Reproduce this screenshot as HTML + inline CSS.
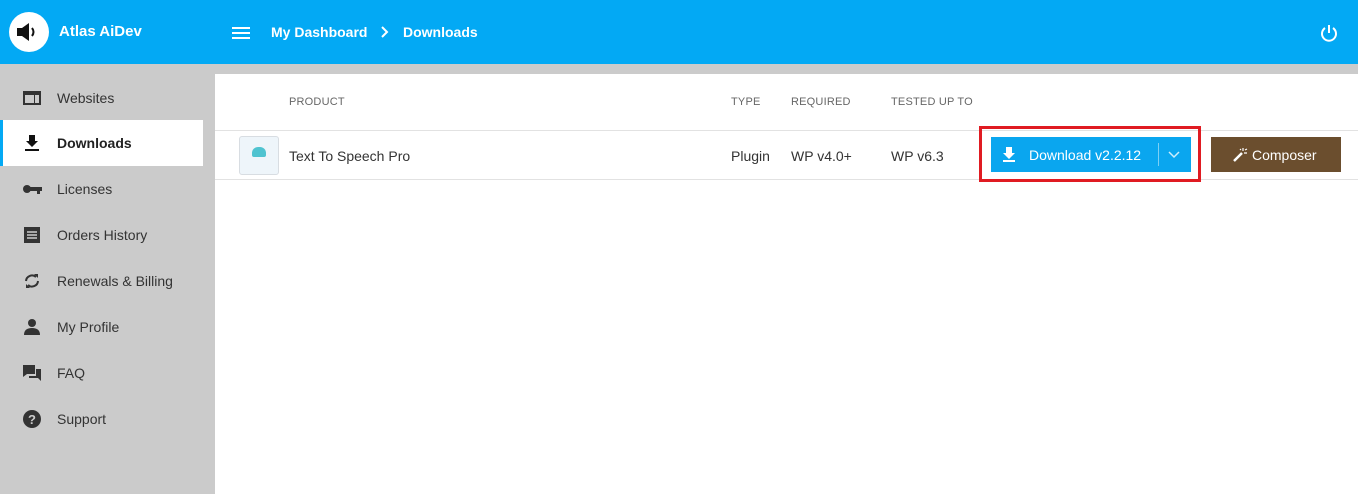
<!DOCTYPE html>
<html><head><style>
*{margin:0;padding:0;box-sizing:border-box}
body{width:1358px;height:494px;overflow:hidden;background:#cbcbcb;font-family:"Liberation Sans",sans-serif;position:relative}
.hd{position:absolute;left:0;top:0;width:1358px;height:64px;background:#03a9f4;color:#fff}
.abs{position:absolute}
.side .it{position:absolute;left:0;width:203px;height:46px;font-size:14px;color:#333;display:flex;align-items:center}
.side .it span{position:absolute;left:57px}
.side .ic{position:absolute;left:22px;width:20px;height:20px}
.panel{position:absolute;left:215px;top:74px;width:1143px;height:420px;background:#fff}
.th{position:absolute;top:22px;font-size:11px;color:#666;letter-spacing:.2px}
.td{position:absolute;top:74px;font-size:14px;color:#333}
</style></head><body>
<div class="hd">
 <div class="abs" style="left:9px;top:12px;width:40px;height:40px;border-radius:50%;background:#fff"></div>
 <svg class="abs" style="left:15px;top:21px" width="26" height="22" viewBox="0 0 26 22"><path d="M2 7h5l7-5v18l-7-5H2z" fill="#111"/><path d="M17 7q3 4 0 8" stroke="#111" stroke-width="2" fill="none"/></svg>
 <div class="abs" style="left:59px;top:23px;font-size:15px;font-weight:bold">Atlas AiDev</div>
 <div class="abs" style="left:232px;top:27px;width:18px;height:2px;background:#fff;box-shadow:0 5px 0 #fff,0 10px 0 #fff"></div>
 <div class="abs" style="left:271px;top:24px;font-size:14px;font-weight:bold">My Dashboard</div>
 <svg class="abs" style="left:380px;top:26px" width="10" height="12"><path d="M2 1l5 5-5 5" stroke="#fff" stroke-width="2" fill="none"/></svg>
 <div class="abs" style="left:403px;top:24px;font-size:14px;font-weight:bold">Downloads</div>
 <svg class="abs" style="left:1319px;top:23px" width="20" height="20" viewBox="0 0 20 20"><path d="M6 5a7 7 0 1 0 8 0" stroke="#fff" stroke-width="2" fill="none"/><path d="M10 2v8" stroke="#fff" stroke-width="2"/></svg>
</div>
<div class="side">
 <div class="it" style="top:75px"><svg class="ic" viewBox="0 0 20 20"><rect x="1" y="3" width="18" height="14" fill="#333"/><rect x="3" y="7" width="9" height="8" fill="#cbcbcb"/><rect x="13" y="7" width="4" height="8" fill="#cbcbcb"/></svg><span>Websites</span></div>
 <div class="it" style="top:120px;background:#fff;border-left:3px solid #03a9f4;font-weight:bold;color:#222"><svg class="ic" style="left:19px" viewBox="0 0 20 20"><path d="M7 2h6v6h3l-6 6-6-6h3z M3 16h14v2H3z" fill="#111"/></svg><span style="left:54px">Downloads</span></div>
 <div class="it" style="top:166px"><svg class="ic" viewBox="0 0 20 20"><circle cx="5" cy="10" r="4" fill="#333"/><rect x="8" y="8" width="12" height="4" fill="#333"/><rect x="15" y="11" width="3" height="4" fill="#333"/></svg><span>Licenses</span></div>
 <div class="it" style="top:212px"><svg class="ic" viewBox="0 0 20 20"><rect x="2" y="2" width="16" height="16" fill="#333"/><path d="M5 7h10M5 10h10M5 13h10" stroke="#cbcbcb" stroke-width="1.5"/></svg><span>Orders History</span></div>
 <div class="it" style="top:258px"><svg class="ic" viewBox="0 0 20 20"><path d="M4 10a6 6 0 0 1 10-4M16 10a6 6 0 0 1-10 4" stroke="#333" stroke-width="2" fill="none"/><path d="M12 3h4v4zM8 17H4v-4z" fill="#333"/></svg><span>Renewals &amp; Billing</span></div>
 <div class="it" style="top:304px"><svg class="ic" viewBox="0 0 20 20"><circle cx="10" cy="6" r="4" fill="#333"/><path d="M2 18q0-7 8-7t8 7z" fill="#333"/></svg><span>My Profile</span></div>
 <div class="it" style="top:350px"><svg class="ic" viewBox="0 0 20 20"><path d="M1 2h12v9H5l-4 3z" fill="#333"/><path d="M14 6h5v12l-3-3H7v-2h7z" fill="#333"/></svg><span>FAQ</span></div>
 <div class="it" style="top:396px"><svg class="ic" viewBox="0 0 20 20"><circle cx="10" cy="10" r="9" fill="#333"/><text x="10" y="15" font-size="13" font-weight="bold" fill="#cbcbcb" text-anchor="middle" font-family="Liberation Sans">?</text></svg><span>Support</span></div>
</div>
<div class="panel">
 <div class="th" style="left:74px">PRODUCT</div>
 <div class="th" style="left:516px">TYPE</div>
 <div class="th" style="left:576px">REQUIRED</div>
 <div class="th" style="left:676px">TESTED UP TO</div>
 <div class="abs" style="left:0;top:56px;width:1143px;height:1px;background:#e2e2e2"></div>
 <div class="abs" style="left:0;top:105px;width:1143px;height:1px;background:#e2e2e2"></div>
 <div class="abs" style="left:24px;top:62px;width:40px;height:39px;border:1px solid #d8dde2;border-radius:3px;background:#eef5fa"></div>
 <div class="abs" style="left:37px;top:73px;width:14px;height:10px;border-radius:6px 6px 2px 2px;background:#4fc3d0"></div>
 <div class="td" style="left:74px">Text To Speech Pro</div>
 <div class="td" style="left:516px">Plugin</div>
 <div class="td" style="left:576px">WP v4.0+</div>
 <div class="td" style="left:676px">WP v6.3</div>
 <div class="abs" style="left:764px;top:52px;width:222px;height:56px;border:3px solid #e01b22"></div>
 <div class="abs" style="left:776px;top:63px;width:200px;height:35px;background:#0aa6ef;color:#fff;font-size:14px">
  <svg class="abs" style="left:10px;top:9px" width="16" height="17"><path d="M5 1h6v6h3l-6 6-6-6h3z M2 14h12v2H2z" fill="#fff"/></svg>
  <div class="abs" style="left:38px;top:10px">Download v2.2.12</div>
  <div class="abs" style="left:167px;top:6px;width:1px;height:23px;background:#7dd0f5"></div>
  <svg class="abs" style="left:177px;top:14px" width="12" height="8"><path d="M1 1l5 5 5-5" stroke="#cdeefc" stroke-width="1.5" fill="none"/></svg>
 </div>
 <div class="abs" style="left:996px;top:63px;width:130px;height:35px;background:#6b4e2e;color:#fff;font-size:14px">
  <svg class="abs" style="left:21px;top:10px" width="16" height="16" viewBox="0 0 16 16"><path d="M2 14L10 6" stroke="#fff" stroke-width="2.5"/><path d="M11 1v3M13 3l2-1M12 6h3M9 3L8 2" stroke="#fff" stroke-width="1.2"/></svg>
  <div class="abs" style="left:41px;top:10px">Composer</div>
 </div>
</div>
</body></html>
